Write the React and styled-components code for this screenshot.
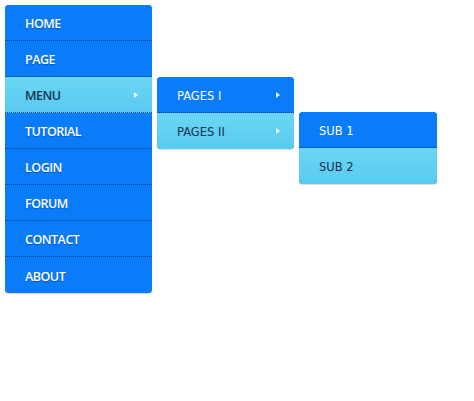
import React from 'react';
import styled, { createGlobalStyle } from 'styled-components';

const Global = createGlobalStyle`
	body{
		margin: 0;
		background: #fff;
		font-family: "DejaVu Sans", Verdana, sans-serif;
	}
`

const Page = styled.div`
	padding: 5px;
`

const List = styled.ul`
	list-style: none;
	margin: 0;
	padding: 0;
	width: ${({width}) => width}px;
	border-radius: 4px;
	background: #0a7cfa;
	box-shadow: 0 1px 1px rgba(0,0,0,0.15);

	${({flyout, level}) => flyout && `
		position: absolute;
		left: 100%;
		top: ${level > 1 ? -1 : 0}px;
		margin-left: 5px;
		z-index: 2;
	`}
`

const Item = styled.li`
	position: relative;
	height: 36px;
	box-sizing: border-box;
	border-bottom: 1px dotted #0b3f86;
	background: ${({active}) => active
		? 'linear-gradient(#6ad6f4, #59caf0)'
		: '#0a7cfa'};

	&:first-child{ border-radius: 4px 4px 0 0 }
	&:last-child{
		border-bottom: none;
		border-radius: 0 0 4px 4px;
	}
`

const Link = styled.a`
	display: flex;
	align-items: center;
	justify-content: space-between;
	height: 100%;
	box-sizing: border-box;
	padding: 2px 14px 0 ${({indent}) => indent}px;
	font-family: ${({main}) => main
		? '"Open Sans", "Noto Sans", sans-serif'
		: '"DejaVu Sans", Verdana, sans-serif'};
	font-size: ${({main}) => main ? 12.5 : 11.5}px;
	font-weight: ${({main}) => main ? 600 : 400};
	letter-spacing: ${({main}) => main ? '-0.5px' : '0'};
	color: ${({active}) => active ? '#14324d' : '#ffffff'};
	text-shadow: ${({active, main}) => active || !main ? 'none' : '0 1px 1px rgba(0,40,110,0.45)'};
	text-decoration: none;
	cursor: pointer;
`

const Arrow = styled.span`
	width: 0;
	height: 0;
	margin-bottom: 2px;
	border-top: 3px solid transparent;
	border-bottom: 3px solid transparent;
	border-left: 4px solid #ffffff;
	opacity: 0.9;
`

const sub2 = [{label: 'SUB 1'}, {label: 'SUB 2', active: true}]

const sub1 = [
	{label: 'PAGES I', arrow: true},
	{label: 'PAGES II', arrow: true, active: true, children: sub2},
]

const main = [
	{label: 'HOME'},
	{label: 'PAGE'},
	{label: 'MENU', arrow: true, active: true, children: sub1},
	{label: 'TUTORIAL'},
	{label: 'LOGIN'},
	{label: 'FORUM'},
	{label: 'CONTACT'},
	{label: 'ABOUT'},
]

const widths = [147, 137, 138]
const indents = [20, 20, 20]

const Menu = ({items, level = 0}) =>
	<List width={widths[level]} flyout={level > 0} level={level}>
		{items.map(it =>
			<Item key={it.label} active={it.active}>
				<Link main={level === 0} active={it.active} indent={indents[level]}>
					<span>{it.label}</span>
					{it.arrow && <Arrow/>}
				</Link>
				{it.children && <Menu items={it.children} level={level + 1}/>}
			</Item>
		)}
	</List>

export default function App(){
	return <>
		<Global/>
		<Page>
			<Menu items={main}/>
		</Page>
	</>
}
